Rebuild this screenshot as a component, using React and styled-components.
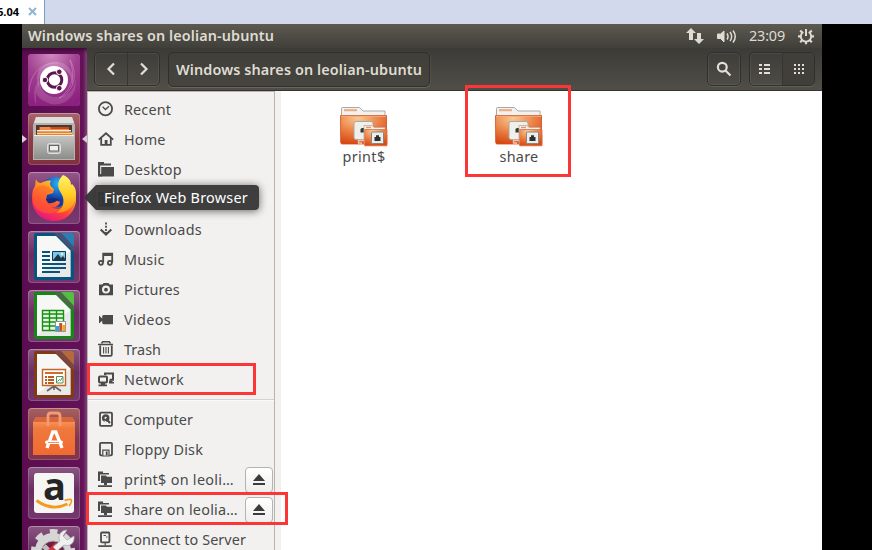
import React, { useLayoutEffect, useRef, useState } from "react";
import styled, { createGlobalStyle, css } from "styled-components";

const GlobalStyle = createGlobalStyle`
  * { box-sizing: border-box; }
  html, body { margin: 0; padding: 0; overflow: hidden; background: #000; }
`;

const Page = styled.div`
  position: relative;
  width: 872px;
  height: 550px;
  overflow: hidden;
  display: flex;
  flex-direction: column;
  background: #000;
  font-family: "Noto Sans", "Open Sans", sans-serif;
  font-size: 14.4px;
  color: #4a4a4a;
`;

const TabStrip = styled.div`
  display: flex;
  flex: 0 0 24px;
  background: #d3d9ed;
`;
const VmTab = styled.div`
  width: 45px;
  height: 24px;
  display: flex;
  align-items: center;
  justify-content: flex-end;
  gap: 9px;
  padding: 0 7px 2px 0;
  overflow: hidden;
  background: #fff;
  border-right: 1px solid #7b9dbd;
  color: #000;
  font: bold 11px "Open Sans", sans-serif;
  white-space: nowrap;
  svg { flex: none; }
`;
const Desktop = styled.div`
  width: 800px;
  flex: 1;
  min-height: 0;
  margin-left: 22px;
  display: flex;
  flex-direction: column;
`;
const TopPanel = styled.header`
  flex: 0 0 24px;
  display: flex;
  align-items: center;
  padding: 0 7px 1px 6px;
  background: linear-gradient(#5c5a50, #403f3a);
  color: #dfdbd2;
  font-weight: 600;
`;
const Indicators = styled.div`
  margin-left: auto;
  display: flex;
  align-items: center;
  gap: 12px;
  font-weight: 400;
  svg { flex: none; }
`;
const Workspace = styled.div`
  flex: 1;
  min-height: 0;
  display: flex;
`;
const Launcher = styled.nav`
  flex: 0 0 65px;
  display: flex;
  flex-direction: column;
  gap: 7px;
  padding: 6px 7px 0 6px;
  background: linear-gradient(90deg, #5b0d50, #641257 94%, #84477b 100%);
  box-shadow: inset 0 5px 4px -3px #35082f;
  overflow: hidden;
`;
const Tile = styled.div`
  position: relative;
  flex: 0 0 52px;
  width: 52px;
  height: 52px;
  border-radius: 4px;
  background: ${(p) => p.$tint};
  box-shadow: inset 0 0 0 1px rgba(255, 255, 255, 0.17), inset 0 1px 0 rgba(255, 255, 255, 0.2);
  svg { display: block; }
`;
const Pip = styled.i`
  position: absolute;
  top: 22px;
  border: 4px solid transparent;
  ${(p) =>
    p.$side === "left"
      ? css`left: -6px; border-left: 5px solid #d9ccd6; border-right: 0;`
      : css`right: -7px; border-right: 5px solid #d9ccd6; border-left: 0;`}
`;
const Files = styled.main`
  flex: 1;
  min-width: 0;
  display: flex;
  flex-direction: column;
  background: #fff;
`;
const Toolbar = styled.div`
  flex: 0 0 43px;
  display: flex;
  align-items: center;
  padding: 0 7px 0 7px;
  background: linear-gradient(#3c3b37, #504e47);
  border-bottom: 1px solid #35342f;
`;
const ButtonGroup = styled.div`
  display: flex;
  height: 34px;
  margin-left: ${(p) => p.$gap || 0}px;
  border: 1px solid #302f2b;
  border-radius: 5px;
  box-shadow: 0 1px 0 rgba(255, 255, 255, 0.1), inset 0 0 0 1px rgba(255, 255, 255, 0.07);
  overflow: hidden;
`;
const ToolButton = styled.button`
  width: 32px;
  height: 32px;
  padding: 0;
  display: grid;
  place-items: center;
  border: 0;
  background: ${(p) => (p.$pressed ? "#403f3a" : "transparent")};
  color: #e3dfd7;
  & + & { border-left: 1px solid #363530; }
`;
const PathButton = styled.div`
  height: 35px;
  width: 262px;
  margin-left: 8px;
  display: flex;
  align-items: center;
  justify-content: center;
  border: 1px solid #302f2b;
  border-radius: 5px;
  background: linear-gradient(#403f3a, #45443e);
  box-shadow: 0 1px 0 rgba(255, 255, 255, 0.14), 1px 0 0 rgba(255, 255, 255, 0.06);
  color: #dfdbd2;
  font-weight: 600;
`;
const Spacer = styled.div`flex: 1;`;
const Content = styled.div`
  flex: 1;
  min-height: 0;
  display: flex;
`;
const Sidebar = styled.aside`
  flex: 0 0 188px;
  padding-top: 2px;
  background: #f2f1f0;
  border: solid #b8b5b1;
  border-width: 1px 1px 0 1px;
  overflow: hidden;
`;
const Gutter = styled.div`
  flex: 0 0 6px;
  background: #f2f1f0;
`;
const Place = styled.div`
  height: 30px;
  display: flex;
  align-items: center;
  padding: 0 1px 0 10px;
  svg { flex: none; }
`;
const PlaceName = styled.div`
  margin-left: 10px;
  flex: 1;
`;
const Divider = styled.div`
  height: 2px;
  margin: 5px 0 3px;
  background: linear-gradient(#d4d2cf 50%, #fafafa 50%);
`;
const Eject = styled.button`
  width: 28px;
  height: 26px;
  margin-top: 1px;
  padding: 0;
  display: grid;
  place-items: center;
  border: 1px solid #b6b3af;
  border-radius: 4px;
  background: linear-gradient(#fff, #efeeed);
`;
const FolderGrid = styled.section`
  flex: 1;
  display: flex;
  align-items: flex-start;
  padding: 15px 0 0 5px;
`;
const Folder = styled.div`
  width: 155px;
  display: flex;
  flex-direction: column;
  align-items: center;
  line-height: 18px;
  svg { display: block; }
`;
const FolderName = styled.div`padding-left: 1px;`;
const Tooltip = styled.div`
  position: absolute;
  left: 96px;
  top: 185px;
  width: 163px;
  height: 25px;
  display: flex;
  align-items: center;
  padding: 0 0 1px 8px;
  border-radius: 0 4px 4px 0;
  background: rgba(52, 52, 52, 0.95);
  color: #fff;
  box-shadow: 0 1px 9px rgba(0, 0, 0, 0.6);
  &::before {
    content: "";
    position: absolute;
    left: -12px;
    top: 0;
    width: 12px;
    height: 25px;
    background: rgba(52, 52, 52, 0.95);
    clip-path: polygon(100% 0, 0 50%, 100% 100%);
  }
`;
const Marker = styled.div`
  position: absolute;
  left: ${(p) => p.$x}px;
  top: ${(p) => p.$y}px;
  width: ${(p) => p.$w}px;
  height: ${(p) => p.$h}px;
  border: 3px solid #fb3637;
  pointer-events: none;
`;
const Tracked = styled.span`
  display: inline-block;
  white-space: pre;
`;

/* Spreads a label evenly over a known line length. */
function Label({ width, children }) {
  const ref = useRef(null);
  const [spacing, setSpacing] = useState(0);
  useLayoutEffect(() => {
    const natural = ref.current.getBoundingClientRect().width;
    setSpacing((width - natural) / children.length);
  }, [width, children]);
  return <Tracked ref={ref} style={{ letterSpacing: spacing }}>{children}</Tracked>;
}

const Glyph = ({ children, size = 16, ...rest }) => (
  <svg width={size} height={size} viewBox={`0 0 ${size} ${size}`} fill="none" stroke="#4a4a4a" strokeWidth="1.8" {...rest}>
    {children}
  </svg>
);
const solid = { fill: "#4a4a4a", stroke: "none" };

const NetFolder = () => (
  <Glyph>
    <path {...solid} d="M0 .5h5V2h6v1.600H2V10H0zM3 4.600h5l1 1.200h5V12H3zM6 12h3v2H6zM0 14.200h14V16H0z" />
  </Glyph>
);
const placeIcons = {
  recent: <Glyph><circle cx="7.5" cy="7.7" r="6.6" /><path strokeWidth="1.3" d="M4.6 5.8 7.5 8.5 11 5.2" /></Glyph>,
  home: <Glyph><path d="M.8 8.6 8 2.3l7.2 6.3" /><path d="M3.2 7v6.800h9.600V7" /><path {...solid} d="M6.700 9h2.800v5H6.700z" /></Glyph>,
  folder: <Glyph><path {...solid} d="M0 1h6v1.500h7v2H2.200v11H0zM3.200 6H16v9.600H3.200z" /><path {...solid} d="M1 13h3v2.600H1z" /></Glyph>,
  downloads: <Glyph><path d="M2.700 8.500 8 13.500l5.300-5" strokeWidth="2.1" /><path d="M8 1.500v11" strokeDasharray="2 1.2" /></Glyph>,
  music: <Glyph><circle cx="2.9" cy="11.8" r="2" /><circle cx="11.9" cy="11.8" r="2" /><path d="M5.200 11.500V2.700h9V11.500M5.200 4h9" /></Glyph>,
  pictures: <Glyph><path {...solid} fillRule="evenodd" d="M1 3.500h3.400L5.600 2h4.800l1.200 1.500H15v10.800H1zM8 4.600a4 4 0 1 0 0 8 4 4 0 0 0 0-8zm0 2.200a1.900 1.900 0 1 1 0 3.800 1.900 1.900 0 0 1 0-3.800z" /></Glyph>,
  videos: <Glyph><path {...solid} d="M1 4.500 4.200 7.500V4.800L5.500 4H15v9.300H5.500l-1.300-1V9.800L1 12.500z" /></Glyph>,
  trash: <Glyph><path d="M2.200 4.500v9q0 1.400 1.400 1.400h8.800q1.400 0 1.400-1.400v-9" /><path d="M0 3.400h15M3.500 2.400 4.700.8h6.600l1.200 1.600" strokeWidth="1.5" /><path strokeWidth="1.1" d="M5.600 6v6.400M8 6v6.400M10.400 6v6.400" /></Glyph>,
  network: <Glyph><rect x="1" y="5.500" width="8" height="6" rx="1" strokeWidth="2" /><path {...solid} d="M3 12h4v1.500h2V15.300H.5v-1.800H3z" /><path strokeWidth="2" d="M7 4V2.500h8V8.700h-3.400" /><path {...solid} d="M11 9.600h3.500V11H16v1.600h-5z" /></Glyph>,
  computer: <Glyph><rect x="2" y="1.600" width="12" height="13.200" rx="1" /><circle cx="7.700" cy="7" r="2.500" strokeWidth="2.6" /><path d="m8 7.500 4 4.500" strokeWidth="2" /><path stroke="#f2f1f0" strokeWidth="1" d="M6.800 9.600 9.300 12.600" /></Glyph>,
  floppy: <Glyph><path d="M4.500 14.300H3q-1 0-1-1V2.800q0-1 1-1h10q1 0 1 1v10.500q0 1-1 1h-1.500" /><path strokeWidth="1.2" d="M4.800 15V9.200H11V15z" /><path {...solid} d="M7.800 10.400h1.800v4H7.800z" /></Glyph>,
  share: <NetFolder />,
  server: <Glyph><rect x="3" y="1.500" width="8.400" height="9.800" rx="1" /><path strokeWidth="1.2" d="M5.500 4.500H8M8 6h1.500M7.200 11v3.500" /><path d="M.3 15.100h13.400" strokeWidth="1.7" /></Glyph>,
};
const places = [
  ["recent", "Recent", 47], ["home", "Home", 41.5], ["folder", "Desktop", 58],
  ["folder", "", 0], ["downloads", "Downloads", 78], ["music", "Music", 40.5],
  ["pictures", "Pictures", 56], ["videos", "Videos", 47], ["trash", "Trash", 37],
  ["network", "Network", 60],
];
const devices = [
  ["computer", "Computer", 69], ["floppy", "Floppy Disk", 79],
  ["share", "print$ on leoli…", 110, true], ["share", "share on leolia…", 114, true],
  ["server", "Connect to Server", 122],
];

function PlaceRow({ icon, name, width, eject }) {
  return (
    <Place>
      {placeIcons[icon]}
      <PlaceName>{name && <Label width={width}>{name}</Label>}</PlaceName>
      {eject && (
        <Eject aria-label="Eject">
          <svg width="14" height="12" viewBox="0 0 14 12" fill="#3c3c3c"><path d="M7 0 13 7H1zM1 9h12v2H1z" /></svg>
        </Eject>
      )}
    </Place>
  );
}

const Art = ({ children }) => <svg width="52" height="52" viewBox="0 0 52 52">{children}</svg>;

const DashArt = () => (
  <Art>
    <defs><radialGradient id="dash" cx=".45" cy="0" r="1"><stop stopColor="#d08bc0" /><stop offset=".5" stopColor="#a0408f" /><stop offset="1" stopColor="#8d2180" /></radialGradient></defs>
    <rect width="52" height="52" rx="4" fill="url(#dash)" />
    <path d="M11 34C4 17 17 6 31 8c11 2 17 14 13 25C46 19 33 10 23 14 12 18 10 26 11 34z" fill="#fff" opacity=".17" />
    <path d="M8 52C4 38 7 30 12 26c-1 13 12 20 23 16 8-3 12-8 12-17 4 19-15 31-29 23-5-2-8-5-10-9z" fill="#fff" opacity=".14" />
    <path d="M42 6c9 15 3 33-11 38 14-9 16-24 11-38zM1 38C2 18 15 8 30 9" fill="none" stroke="#e5add9" strokeWidth=".7" opacity=".55" />
    <circle cx="26" cy="26" r="14" fill="#fff" />
    <circle cx="26.5" cy="26" r="7.3" fill="none" stroke="#60154f" strokeWidth="3" />
    <g fill="#60154f" stroke="#fff" strokeWidth="1"><circle cx="17" cy="26" r="2.8" /><circle cx="31.3" cy="17.8" r="2.8" /><circle cx="31.3" cy="34.2" r="2.8" /></g>
  </Art>
);
const CabinetArt = () => (
  <Art>
    <defs><linearGradient id="cab" x2="0" y2="1"><stop stopColor="#c7c7c6" /><stop offset="1" stopColor="#8c8c8a" /></linearGradient></defs>
    <path d="M8 4h36l3 8v35H5V12z" fill="#b4b3b2" /><path d="M8 4h36l2 6H6z" fill="#dfdfde" />
    <path d="M8 12h36v10H8z" fill="#4e3832" />
    <path d="M11 14h30v8H11z" fill="#c64d16" /><path d="M12 14h10l1 2h18v1H12z" fill="#f4894b" />
    <path d="M9 17h34v1.500H9z" fill="#fff0d5" /><path d="M9 19h35v3H9z" fill="#e5862f" /><path d="M9 20h35v1H9z" fill="#f8d197" />
    <path d="M6 22h40v24H6z" fill="url(#cab)" /><path d="M6 22.500h40" stroke="#ededec" />
    <rect x="19.5" y="30.5" width="13" height="10" rx="2" fill="#bababa" stroke="#e1e1e0" /><rect x="21.5" y="32.5" width="9" height="5.5" fill="#eee" stroke="#646463" />
  </Art>
);
const FirefoxArt = () => (
  <Art>
    <defs>
      <linearGradient id="fox" x1=".8" y1="0" x2=".3" y2="1"><stop stopColor="#ffe14a" /><stop offset=".35" stopColor="#ff9820" /><stop offset=".7" stopColor="#ff3b3e" /><stop offset="1" stopColor="#e31587" /></linearGradient>
      <radialGradient id="globe" cx=".6" cy=".2"><stop stopColor="#28b4f7" /><stop offset="1" stopColor="#123ba5" /></radialGradient>
      <linearGradient id="tail" x2="0" y2="1"><stop stopColor="#fff36a" /><stop offset=".5" stopColor="#ffcf29" /><stop offset="1" stopColor="#ff8b17" /></linearGradient>
    </defs>
    <circle cx="27" cy="21" r="16" fill="url(#globe)" />
    <path d="M8 7c1 3 3 4 5 4 4-2 7-3 10-2-2 3-1 5 3 8l-1 4-6 2-1 5c2 2 4 2 6 1 4-1 6 0 8 1-1 4-5 6-9 5 10 6 18-2 14-14 5 4 3-7 0-11 8 4 12 11 11 20-2 12-11 19-22 19C13 49 4 39 4 27c0-7 1-10 3-13z" fill="url(#fox)" />
    <path d="M5 20c5-7 10-8 15-5l5 4-6 3c-3 3-2 7 0 9 4 4 11 5 17 2-6 9-17 11-26 5-5-4-6-11-5-18z" fill="#ff662a" opacity=".5" />
    <path d="M35 3c-6 6-6 12-2 18 5 8 2 16-5 20 12 0 19-7 20-18 .5-6-2-9-4-11l-1 1c0-5-3-8-8-10z" fill="url(#tail)" />
    <path d="M18 27c5 0 8-2 13 1-4 1-5 4-11 3z" fill="#132d74" />
  </Art>
);
const OfficeArt = ({ color, fold, children }) => (
  <Art>
    <path d="M8 2h36q2 0 2 2v43q0 2-2 2H8q-2 0-2-2V4q0-2 2-2z" fill={color} />
    <path d="M26 2h7l13 14v5z" fill="#75506c" opacity=".6" />
    <path d="M33 2h11q2 0 2 2v12z" fill={fold} />
    <path d="M9 5h19l14.500 14.500V46H9z" fill="#f7f7f6" /><path d="M9 45 42.500 20v26H9z" fill="#dededc" opacity=".55" />
    {children}
  </Art>
);
const Writer = () => (
  <OfficeArt color="#075482" fold="#297fb0">
    <path d="M14 21h8M14 25h8M14 29h8M14 33h24M14 37h24M14 41h18" stroke="#075482" strokeWidth="2" />
    <path d="M24.500 20.500h13v9h-13z" fill="#7cc6ef" stroke="#073c60" /><path d="m25 29 5-6 3 4 2-2 3 4z" fill="#1f3845" /><circle cx="34" cy="23" r="1.2" fill="#fff3b0" />
  </OfficeArt>
);
const Calc = () => (
  <OfficeArt color="#148716" fold="#55bd43">
    <path d="M14.500 20.500h21v20h-21zM14.500 24h21M14.500 28h21M14.500 32h21M14.500 36h21M21.500 20v20M28.500 20v20" fill="#e6f7e0" stroke="#159014" strokeWidth="1.4" />
    <path d="M27.500 31.500h10v10h-10z" fill="#fff" stroke="#8695a0" /><path d="M28 36h3v5h-3z" fill="#2fa3e7" /><path d="M31.200 33h3v8h-3z" fill="#c55424" /><path d="M34.400 35h3v6h-3z" fill="#f6a527" />
  </OfficeArt>
);
const Impress = () => (
  <OfficeArt color="#823a13" fold="#b46a3a">
    <path d="m26 37-7 5M26 37l7 5M26 36v5" stroke="#666" strokeWidth="1.6" />
    <path d="M14.500 20.500h23v16h-23z" fill="#fff" stroke="#c36529" strokeWidth="1.4" /><path d="M17 24h18" stroke="#d16b2f" strokeWidth="2" />
    <path d="M17 28h9M17 31h9M17 34h9" stroke="#bd5a20" strokeWidth="2" strokeDasharray="2 1 6 1" /><path d="M28.500 27.500h6.500v6.500h-6.500z" fill="#fff" stroke="#5a8d55" /><path d="m29.500 32.500 2-2 1 1 2-3" fill="none" stroke="#31923a" />
  </OfficeArt>
);
const Software = () => (
  <Art>
    <defs><linearGradient id="bag" x2="0" y2="1"><stop stopColor="#ffa06b" /><stop offset=".3" stopColor="#ef793d" /><stop offset="1" stopColor="#f06a31" /></linearGradient></defs>
    <path d="M8 9h36l3 5v33H5V14z" fill="url(#bag)" /><path d="M8 9h36l3 5H5z" fill="#d8683c" />
    <path d="M20 18V8q0-3 3-3h6q3 0 3 3v10" fill="none" stroke="#f69a70" strokeWidth="2.8" />
    <path d="m19 40 5.800-16h3L34 40" stroke="#fff" strokeWidth="3.4" fill="none" /><rect x="17" y="32.5" width="18" height="3.6" rx="1.8" fill="#fff" /><path d="M20 34.500h11" stroke="#f28c5c" strokeWidth="1" />
  </Art>
);
const AmazonLetter = styled.text`
  font: bold 38px "Open Sans", sans-serif;
`;
const Amazon = () => (
  <Art>
    <rect x="6" y="6" width="40" height="40" rx="3" fill="#f5f5f4" /><AmazonLetter x="26.5" y="33" textAnchor="middle" fill="#252525">a</AmazonLetter>
    <path d="M8.500 33.500q15 11 31 3.500" fill="none" stroke="#f79a1b" strokeWidth="2.8" /><path d="M36.500 33.500q7.500-2.500 7 .5-.4 3-2.500 5" fill="none" stroke="#f79a1b" strokeWidth="1.6" />
  </Art>
);
const Settings = () => (
  <Art>
    <circle cx="25" cy="25" r="18" fill="#d6d6d4" /><circle cx="25" cy="25" r="19.5" fill="none" stroke="#d6d6d4" strokeWidth="5" strokeDasharray="7.66 7.66" strokeDashoffset="3.8" />
    <circle cx="25" cy="27" r="12" fill="#701d49" stroke="#aaa" /><path d="m16 20 19 19" stroke="#bebebd" strokeWidth="5" />
    <path d="m13 36 17-17" stroke="#d6303b" strokeWidth="7" /><path d="m25 21 7-6c-3-5 1-11 7-11l-4 6 4 4 7-4c1 7-4 11-10 9l-7 6z" fill="#f0f0ef" stroke="#a7a7a7" strokeWidth=".7" />
  </Art>
);
const glass = "linear-gradient(#8b5682, #6a2d62 45%, #74376d)";
const apps = [
  { Icon: DashArt, tint: "#a34393" },
  { Icon: CabinetArt, tint: "linear-gradient(#a9646a, #8c3b47 50%, #81313e)", active: true },
  { Icon: FirefoxArt, tint: "linear-gradient(#95578a, #702d67 50%, #783a70)" },
  { Icon: Writer, tint: glass }, { Icon: Calc, tint: glass }, { Icon: Impress, tint: glass },
  { Icon: Software, tint: "linear-gradient(#a7605e, #82354f 60%, #80344d)" },
  { Icon: Amazon, tint: glass }, { Icon: Settings, tint: glass },
];

const ShareFolder = () => (
  <svg width="48" height="42" viewBox="0 0 48 42">
    <defs><radialGradient id="orange" cx=".38" cy=".1" r=".9"><stop stopColor="#f8c995" /><stop offset=".5" stopColor="#ec8549" /><stop offset="1" stopColor="#d74813" /></radialGradient></defs>
    <path d="M1.500 12V2.500q0-1 1-1h17L23 5h22v8H1.500z" fill="#f1f1f0" stroke="#aaa9a8" /><path d="M4 4.200h13" stroke="#efaa7d" strokeWidth="2" />
    <path d="M.5 9.500h46v27q0 1.500-1.500 1.500H2Q.7 38 .7 36z" fill="url(#orange)" stroke="#cf4b1b" strokeWidth=".8" /><path d="M1 10.300h45" stroke="#f8ad77" />
    <rect x="14" y="15.5" width="19" height="18" rx="2" fill="#efefeb" stroke="#aaa99f" /><path d="M20.500 23v3.500h5V22h-3.500z" fill="#333b2f" /><path d="M24 34.500h-5.500v2.500h3v2" fill="none" stroke="#f0c4ae" strokeWidth="1.4" />
    <path d="M24 37V19.500h8l2 2h11V26l2 3v9H24z" fill="#f5f3f1" stroke="#bba99f" strokeWidth=".8" /><path d="M26 21.400h5" stroke="#ea955f" strokeWidth="1.5" />
    <path d="M27 23.500h20v16.300H24.700V23.500z" fill="url(#orange)" stroke="#e0703f" strokeWidth=".8" />
    <rect x="31.5" y="26" width="12" height="11.5" rx="1" fill="#ededeb" stroke="#858782" /><path d="M34.500 35v-4h1.500v-1.700h3V31h1.500v4z" fill="#2d302d" />
  </svg>
);

export default function App() {
  return (
    <>
      <GlobalStyle />
      <Page>
        <TabStrip>
          <VmTab>6.04
            <svg width="9" height="9" viewBox="0 0 9 9" stroke="#91b4d2" strokeWidth="2"><path d="m1 1 7 7M8 1 1 8" /></svg>
          </VmTab>
        </TabStrip>
        <Desktop>
          <TopPanel>
            <Label width={246}>Windows shares on leolian-ubuntu</Label>
            <Indicators>
              <svg width="18" height="18" viewBox="0 0 18 18" fill="#dfdbd2"><path d="M5 1 10 6H7v7H3V6H0zM11 6h4v6h3l-5 5-5-5h3z" /></svg>
              <svg width="21" height="18" viewBox="0 0 21 18" fill="none" stroke="#dfdbd2" strokeWidth="1.5"><path d="M1.500 7h3L8 4v11l-3.500-3.500H1.500z" fill="#dfdbd2" strokeWidth="1" /><path d="M11 6.500q2 3 0 6M14 5q3.300 4.500 0 9M17 3.500q4.500 6 0 12" /></svg>
              <Label width={36}>23:09</Label>
              <svg width="18" height="18" viewBox="0 0 18 18" fill="none" stroke="#dfdbd2"><path d="M6.300 5a5.200 5.200 0 1 0 5.400 0" strokeWidth="1.900" /><path d="M9 2v7" strokeWidth="2" /><path d="m3.200 3.500 2 2M14.800 3.500l-2 2M1 9.300h3M14 9.300h3M3.200 15.200l2-2M14.800 15.200l-2-2M9 14.500v2.800" strokeWidth="2.200" /></svg>
            </Indicators>
          </TopPanel>
          <Workspace>
            <Launcher>
              {apps.map(({ Icon, tint, active }, i) => (
                <Tile key={i} $tint={tint}>
                  <Icon />
                  {active && <><Pip $side="left" /><Pip $side="right" /></>}
                </Tile>
              ))}
            </Launcher>
            <Files>
              <Toolbar>
                <ButtonGroup>
                  <ToolButton aria-label="Back"><svg width="10" height="14" viewBox="0 0 10 14" fill="none" stroke="currentColor" strokeWidth="2.2"><path d="M8 1.500 2.500 7 8 12.500" /></svg></ToolButton>
                  <ToolButton aria-label="Forward"><svg width="10" height="14" viewBox="0 0 10 14" fill="none" stroke="currentColor" strokeWidth="2.2"><path d="M2 1.500 7.500 7 2 12.500" /></svg></ToolButton>
                </ButtonGroup>
                <PathButton><Label width={246}>Windows shares on leolian-ubuntu</Label></PathButton>
                <Spacer />
                <ButtonGroup>
                  <ToolButton aria-label="Search"><svg width="16" height="16" viewBox="0 0 16 16" fill="none" stroke="currentColor" strokeWidth="2.2"><circle cx="6.300" cy="6.200" r="4.400" /><path d="m9.500 9.500 5 5" /></svg></ToolButton>
                </ButtonGroup>
                <ButtonGroup $gap={8}>
                  <ToolButton aria-label="List view"><svg width="14" height="10" viewBox="0 0 14 10" fill="currentColor"><path d="M0 0h3v2H0zM5 0h6v2H5zM0 4h3v2H0zM5 4h6v2H5zM0 8h3v2H0zM5 8h6v2H5z" /></svg></ToolButton>
                  <ToolButton $pressed aria-label="Grid view"><svg width="10" height="10" viewBox="0 0 10 10" fill="currentColor"><path d="M0 0h2v2H0zM4 0h2v2H4zM8 0h2v2H8zM0 4h2v2H0zM4 4h2v2H4zM8 4h2v2H8zM0 8h2v2H0zM4 8h2v2H4zM8 8h2v2H8z" /></svg></ToolButton>
                </ButtonGroup>
              </Toolbar>
              <Content>
                <Sidebar>
                  {places.map(([icon, name, width]) => <PlaceRow key={name} icon={icon} name={name} width={width} />)}
                  <Divider />
                  {devices.map(([icon, name, width, eject]) => <PlaceRow key={name} icon={icon} name={name} width={width} eject={eject} />)}
                </Sidebar>
                <Gutter />
                <FolderGrid>
                  <Folder><ShareFolder /><FolderName><Label width={43}>print$</Label></FolderName></Folder>
                  <Folder><ShareFolder /><FolderName><Label width={39}>share</Label></FolderName></Folder>
                </FolderGrid>
              </Content>
            </Files>
          </Workspace>
        </Desktop>
        <Tooltip><Label width={144}>Firefox Web Browser</Label></Tooltip>
        <Marker $x={465} $y={85} $w={106} $h={92} />
        <Marker $x={87} $y={363} $w={169} $h={32} />
        <Marker $x={86} $y={492} $w={202} $h={33} />
      </Page>
    </>
  );
}
